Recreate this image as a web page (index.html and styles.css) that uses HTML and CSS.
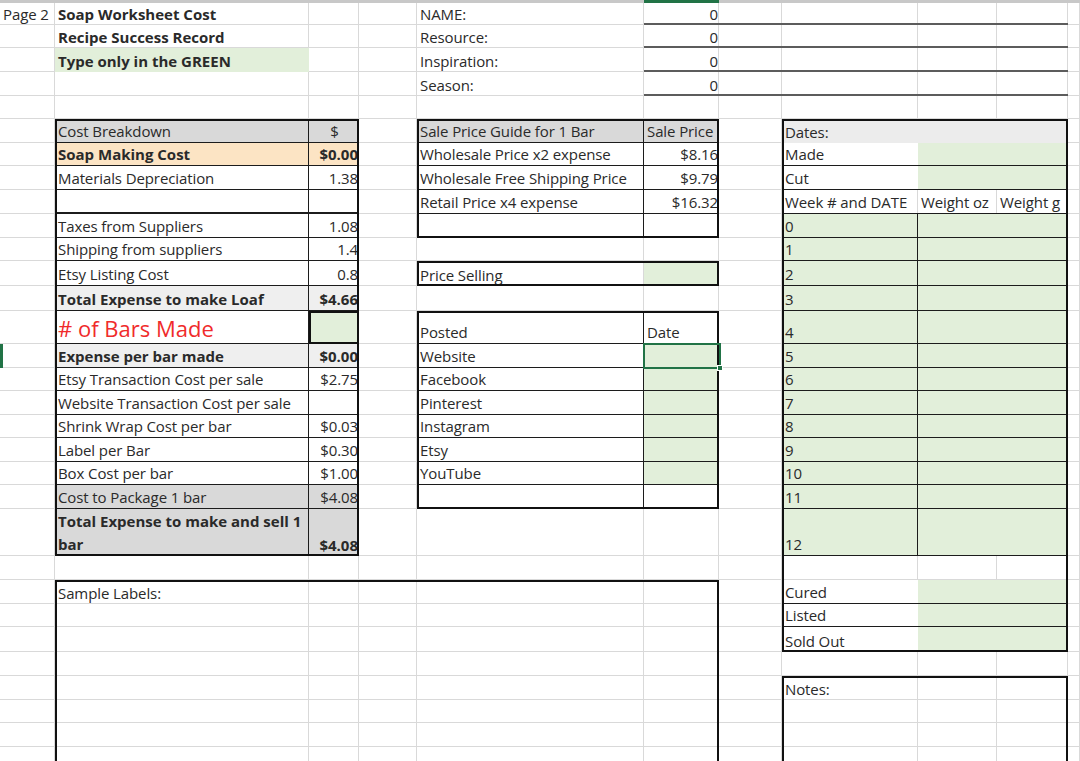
FILE: index.html
```html
<!DOCTYPE html>
<html lang="en">
<head>
<meta charset="utf-8">
<title>Soap Worksheet Cost</title>
<link rel="stylesheet" href="styles.css">
</head>
<body>
<div class="topbar"><div class="topsel"></div></div>
<div class="sheet">
  <div class="hl"><i></i><i></i><i></i><i></i><i></i><i></i><i></i><i></i><i></i><i></i><i></i><i></i><i></i><i></i><i></i><i></i><i></i><i></i><i></i><i></i><i></i><i></i><i></i><i></i><i></i><i></i><i></i><i></i><i></i><i></i><i></i></div>
  <div class="vl"><i></i><i></i><i></i><i></i><i></i><i></i><i></i><i></i><i></i><i></i><i></i></div>
  <div class="cells">
    <!-- header rows -->
    <div class="c r1 cA">Page 2</div>
    <div class="c r1 cB b">Soap Worksheet Cost</div>
    <div class="c r2 cB b">Recipe Success Record</div>
    <div class="c r3 cB b green">Type only in the GREEN</div>

    <div class="c r1 cE">NAME:</div>
    <div class="c r2 cE">Resource:</div>
    <div class="c r3 cE">Inspiration:</div>
    <div class="c r4 cE">Season:</div>
    <div class="ul r1"></div>
    <div class="ul r2"></div>
    <div class="ul r3"></div>
    <div class="ul r4"></div>
    <div class="c r1 cF num">0</div>
    <div class="c r2 cF num">0</div>
    <div class="c r3 cF num">0</div>
    <div class="c r4 cF num">0</div>

    <!-- cost breakdown -->
    <div class="c r6 cB gray bb br">Cost Breakdown</div><div class="c r6 cC gray bb ctr">$</div>
    <div class="c r7 cB orange bb br b">Soap Making Cost</div><div class="c r7 cC orange bb num b">$0.00</div>
    <div class="c r8 cB bb br">Materials Depreciation</div><div class="c r8 cC bb num">1.38</div>
    <div class="c r9 cB bb2 br"></div><div class="c r9 cC bb2"></div>
    <div class="c r10 cB bb br">Taxes from Suppliers</div><div class="c r10 cC bb num">1.08</div>
    <div class="c r11 cB bb br">Shipping from suppliers</div><div class="c r11 cC bb num">1.4</div>
    <div class="c r12 cB bb br">Etsy Listing Cost</div><div class="c r12 cC bb num">0.8</div>
    <div class="c r13 cB lgray bb br b">Total Expense to make Loaf</div><div class="c r13 cC lgray bb num b">$4.66</div>
    <div class="c r14 cB bb br red"># of Bars Made</div><div class="c r14 cC green boxed"></div>
    <div class="c r15 cB lgray bb br b">Expense per bar made</div><div class="c r15 cC lgray bb num b">$0.00</div>
    <div class="c r16 cB bb br">Etsy Transaction Cost per sale</div><div class="c r16 cC bb num">$2.75</div>
    <div class="c r17 cB bb br">Website Transaction Cost per sale</div><div class="c r17 cC bb num"></div>
    <div class="c r18 cB bb br">Shrink Wrap Cost per bar</div><div class="c r18 cC bb num">$0.03</div>
    <div class="c r19 cB bb br">Label per Bar</div><div class="c r19 cC bb num">$0.30</div>
    <div class="c r20 cB bb br">Box Cost per bar</div><div class="c r20 cC bb num">$1.00</div>
    <div class="c r21 cB gray bb br">Cost to Package 1 bar</div><div class="c r21 cC gray bb num">$4.08</div>
    <div class="c r22 cB gray br b wrap">Total Expense to make and sell 1<br>bar</div><div class="c r22 cC gray num b">$4.08</div>

    <!-- sale price guide -->
    <div class="c r6 cE gray bb br">Sale Price Guide for 1 Bar</div><div class="c r6 cF gray bb">Sale Price</div>
    <div class="c r7 cE bb br">Wholesale Price x2 expense</div><div class="c r7 cF bb num">$8.16</div>
    <div class="c r8 cE bb br">Wholesale Free Shipping Price</div><div class="c r8 cF bb num">$9.79</div>
    <div class="c r9 cE bb br">Retail Price x4 expense</div><div class="c r9 cF bb num">$16.32</div>
    <div class="c r10 cE br"></div><div class="c r10 cF"></div>

    <!-- price selling -->
    <div class="c r12 cE">Price Selling</div><div class="c r12 cF green"></div>

    <!-- posted -->
    <div class="c r14 cE bb br">Posted</div><div class="c r14 cF bb">Date</div>
    <div class="c r15 cE bb br">Website</div><div class="c r15 cF bb green"></div>
    <div class="c r16 cE bb br">Facebook</div><div class="c r16 cF bb green"></div>
    <div class="c r17 cE bb br">Pinterest</div><div class="c r17 cF bb green"></div>
    <div class="c r18 cE bb br">Instagram</div><div class="c r18 cF bb green"></div>
    <div class="c r19 cE bb br">Etsy</div><div class="c r19 cF bb green"></div>
    <div class="c r20 cE bb br">YouTube</div><div class="c r20 cF bb green"></div>
    <div class="c r21 cE br"></div><div class="c r21 cF"></div>

    <!-- dates -->
    <div class="c r6 cHJ dgray">Dates:</div>
    <div class="c r7 cH white bb">Made</div><div class="c r7 cIJ green bb"></div>
    <div class="c r8 cH white bb">Cut</div><div class="c r8 cIJ green bb"></div>
    <div class="c r9 cH bb">Week # and DATE</div><div class="c r9 cI bb">Weight oz</div><div class="c r9 cJ bb">Weight g</div>
    <div class="c r10 cH green bb br">0</div><div class="c r10 cIJ green bb"></div>
    <div class="c r11 cH green bb br">1</div><div class="c r11 cIJ green bb"></div>
    <div class="c r12 cH green bb br">2</div><div class="c r12 cIJ green bb"></div>
    <div class="c r13 cH green bb br">3</div><div class="c r13 cIJ green bb"></div>
    <div class="c r14 cH green bb br">4</div><div class="c r14 cIJ green bb"></div>
    <div class="c r15 cH green bb br">5</div><div class="c r15 cIJ green bb"></div>
    <div class="c r16 cH green bb br">6</div><div class="c r16 cIJ green bb"></div>
    <div class="c r17 cH green bb br">7</div><div class="c r17 cIJ green bb"></div>
    <div class="c r18 cH green bb br">8</div><div class="c r18 cIJ green bb"></div>
    <div class="c r19 cH green bb br">9</div><div class="c r19 cIJ green bb"></div>
    <div class="c r20 cH green bb br">10</div><div class="c r20 cIJ green bb"></div>
    <div class="c r21 cH green bb br">11</div><div class="c r21 cIJ green bb"></div>
    <div class="c r22 cH green bb br">12</div><div class="c r22 cIJ green bb"></div>
    <div class="c r24 cH white bb">Cured</div><div class="c r24 cIJ green bb"></div>
    <div class="c r25 cH white bb">Listed</div><div class="c r25 cIJ green bb"></div>
    <div class="c r26 cH white">Sold Out</div><div class="c r26 cIJ green"></div>

    <!-- boxes lower -->
    <div class="c r24 cB">Sample Labels:</div>
    <div class="c r28 cH">Notes:</div>

    <!-- frames -->
    <div class="frame f-cost"></div>
    <div class="frame f-sale"></div>
    <div class="frame f-price"></div>
    <div class="frame f-post"></div>
    <div class="frame f-dates"></div>
    <div class="frame f-labels"></div>
    <div class="frame f-notes"></div>

    <!-- selection -->
    <div class="rowsel r15 cA"></div>
    <div class="sel r15 cF"><span class="handle"></span></div>
  </div>
</div>
</body>
</html>
```

FILE: styles.css
```css
:root {
  --cols: 55px 254px 50px 58px 227px 75px 63px 136px 79px 71px 12px;
  --rows: 22px 23px 24px 24px 23px 24px 23px 24px 24px 24px 23px 25px 25px 33px 24px 23px 24px 23px 24px 23px 24px 47px 24px 24px 23px 25px 24px 24px 23px 24px 24px;
  --grid: #d9d9d9;
  --ink: #2a2a2a;
  --line: #1c1c1c;
  --xlgreen: #217346;
}

* { box-sizing: border-box; }

body {
  margin: 0;
  overflow: hidden;
  background: #fff;
  font-family: "Open Sans", "Liberation Sans", sans-serif;
  font-size: 15px;
  letter-spacing: -0.1px;
  color: var(--ink);
}

.topbar {
  display: grid;
  grid-template-columns: var(--cols);
  height: 3px;
  background: #c8c8c8;
}
.topsel { grid-column: 6; background: var(--xlgreen); }

.sheet { display: grid; }
.sheet > * { grid-area: 1 / 1; }

.hl { display: grid; grid-template-rows: var(--rows); }
.hl i { border-bottom: 1px solid var(--grid); }

.vl { display: grid; grid-template-columns: var(--cols); grid-auto-flow: column; }
.vl i { border-right: 1px solid var(--grid); }

.cells {
  display: grid;
  grid-template-columns: var(--cols);
  grid-template-rows: var(--rows);
}

/* rows */
.r1{grid-row:1}.r2{grid-row:2}.r3{grid-row:3}.r4{grid-row:4}.r5{grid-row:5}
.r6{grid-row:6}.r7{grid-row:7}.r8{grid-row:8}.r9{grid-row:9}.r10{grid-row:10}
.r11{grid-row:11}.r12{grid-row:12}.r13{grid-row:13}.r14{grid-row:14}.r15{grid-row:15}
.r16{grid-row:16}.r17{grid-row:17}.r18{grid-row:18}.r19{grid-row:19}.r20{grid-row:20}
.r21{grid-row:21}.r22{grid-row:22}.r23{grid-row:23}.r24{grid-row:24}.r25{grid-row:25}
.r26{grid-row:26}.r27{grid-row:27}.r28{grid-row:28}.r29{grid-row:29}.r30{grid-row:30}
.r31{grid-row:31}

/* columns */
.cA{grid-column:1}.cB{grid-column:2}.cC{grid-column:3}.cD{grid-column:4}
.cE{grid-column:5}.cF{grid-column:6}.cG{grid-column:7}.cH{grid-column:8}
.cI{grid-column:9}.cJ{grid-column:10}
.cIJ{grid-column:9 / 11}.cHJ{grid-column:8 / 11}

/* cells */
.c {
  display: flex;
  align-items: flex-end;
  padding: 0 2px 1px 3px;
  white-space: nowrap;
  line-height: 20px;
  min-width: 0;
}
.num { justify-content: flex-end; padding-right: 1px; }
.ctr { justify-content: center; }
.b { font-weight: 700; letter-spacing: 0; }
.wrap { white-space: normal; line-height: 23px; padding-bottom: 0; }

.green { background: #e2efda; }
.gray { background: #d9d9d9; }
.lgray { background: #efefef; }
.dgray { background: #ececec; }
.orange { background: #fce4c4; }
.white { background: #fff; }

.bb { border-bottom: 1px solid var(--line); }
.bb2 { border-bottom: 2px solid var(--line); }
.br { border-right: 1px solid var(--line); }

.red {
  color: #f02b2b;
  font-size: 22px;
  line-height: 28px;
  padding-bottom: 1px;
  letter-spacing: 0;
}
.boxed { border: 2px solid #111; }

.ul {
  grid-column: 6 / 11;
  border-bottom: 2px solid #5c5c5c;
}

/* frames */
.frame { border: 2px solid #111; }
.f-cost   { grid-row: 6 / 23;  grid-column: 2 / 4; }
.f-sale   { grid-row: 6 / 11;  grid-column: 5 / 7; }
.f-price  { grid-row: 12 / 13; grid-column: 5 / 7; }
.f-post   { grid-row: 14 / 22; grid-column: 5 / 7; }
.f-dates  { grid-row: 6 / 27;  grid-column: 8 / 11; }
.f-labels { grid-row: 24 / 32; grid-column: 2 / 7; }
.f-notes  { grid-row: 28 / 32; grid-column: 8 / 11; }

/* selection */
.rowsel { border-left: 3px solid var(--xlgreen); }
.sel {
  position: relative;
  border: 2px solid var(--xlgreen);
  margin: -1px -2px -1px -1px;
}
.handle {
  position: absolute;
  right: -4px;
  bottom: -4px;
  width: 6px;
  height: 6px;
  background: var(--xlgreen);
  border: 1px solid #fff;
}
```
